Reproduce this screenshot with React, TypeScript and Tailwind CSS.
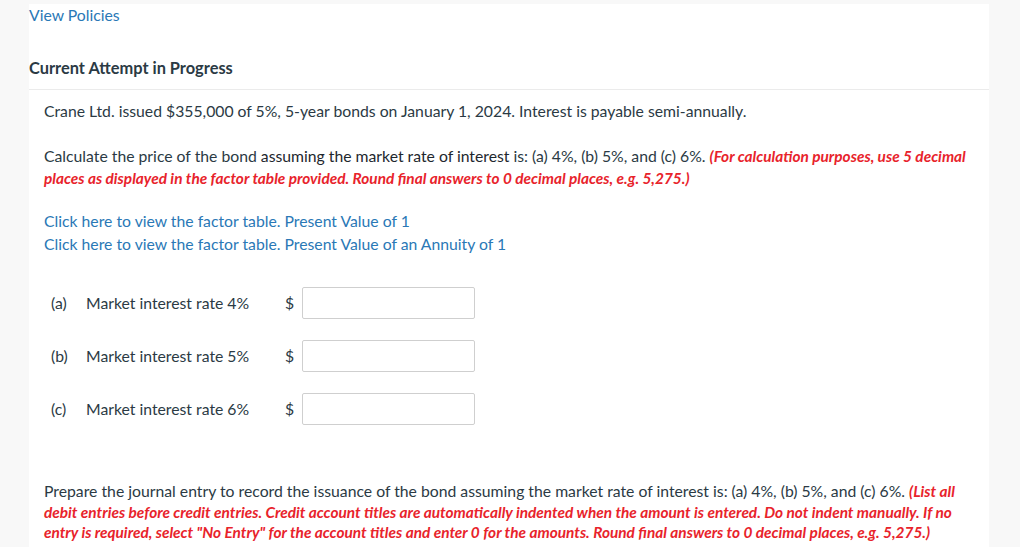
import React from "react";

const font = { fontFamily: "Lato, 'Noto Sans', sans-serif" };

function Row({ l, rate }: { l: string; rate: string }) {
  return (
    <div className="flex items-center h-[32px]">
      <span className="w-[42px] pl-[7px]">{l}</span>
      <span className="w-[199px]">Market interest rate {rate}</span>
      <span className="w-[17px]">$</span>
      <div className="w-[173px] h-[32px] border border-[#cfcfcf] rounded-[2px] bg-white" />
    </div>
  );
}

export default function App() {
  return (
    <div className="min-h-[547px] bg-[#f8f8f8] pl-[29px] pt-[4px] text-[15.75px] text-[#2b3a44]" style={font}>
      <div className="w-[960px] min-h-[543px] bg-white">
        <div className="leading-[22px] text-[#2a78b6]">View Policies</div>
        <div className="mt-[31px] leading-[22px] font-bold text-[16.4px]">Current Attempt in Progress</div>
        <div className="mt-[10px] border-t border-[#ebebeb]" />
        <div className="pl-[15px] pt-[10px] pr-[18px]">
          <p className="leading-[22px]">
            Crane Ltd. issued $355,000 of 5%, 5-year bonds on January 1, 2024. Interest is payable semi-annually.
          </p>
          <p className="mt-[23px] leading-[22px]">
            Calculate the price of the bond <span className="text-[#1e272e]">assuming the market rate of interest</span> is: (a) 4%, (b) 5%, and (c) 6%.{" "}
            <span className="text-[#e8232b] font-bold italic text-[15.4px]">
              (For calculation purposes, use 5 decimal places as displayed in the factor table provided. Round final answers to 0 decimal places, e.g. 5,275.)
            </span>
          </p>
          <div className="mt-[20px] leading-[23px] text-[#2a78b6]">
            <div>Click here to view the factor table. Present Value of 1</div>
            <div>Click here to view the factor table. Present Value of an Annuity of 1</div>
          </div>
          <div className="mt-[32px] flex flex-col gap-[21px]">
            <Row l="(a)" rate="4%" />
            <Row l="(b)" rate="5%" />
            <Row l="(c)" rate="6%" />
          </div>
          <p className="mt-[56px] leading-[20.6px]">
            Prepare the journal entry to record the issuance of the bond assuming the market rate of interest is: (a) 4%, (b) 5%, and (c) 6%.{" "}
            <span className="text-[#e8232b] font-bold italic text-[15.4px]">
              (List all debit entries before credit entries. Credit account titles are automatically indented when the amount is entered. Do not indent manually. If no entry is required, select "No Entry" for the account titles and enter 0 for the amounts. Round final answers to 0 decimal places, e.g. 5,275.)
            </span>
          </p>
        </div>
      </div>
    </div>
  );
}
